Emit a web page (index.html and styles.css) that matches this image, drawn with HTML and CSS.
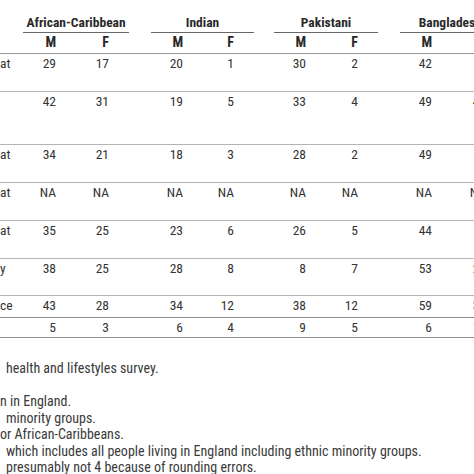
FILE: index.html
```html
<!DOCTYPE html>
<html>
<head>
<meta charset="utf-8">
<link rel="stylesheet" href="styles.css">
</head>
<body>
<div class="page">
  <div class="table">
    <div class="row groups">
      <div class="lab"></div>
      <div class="grp g1">African-Caribbean</div>
      <div class="gap"></div>
      <div class="grp g2">Indian</div>
      <div class="gap"></div>
      <div class="grp g3">Pakistani</div>
      <div class="gap"></div>
      <div class="grp g4">Bangladeshi</div>
    </div>
    <div class="row sexes">
      <div class="lab"></div>
      <div>M</div><div>F</div><div></div>
      <div>M</div><div>F</div><div></div>
      <div>M</div><div>F</div><div></div>
      <div>M</div><div class="last">F</div>
    </div>
    <div class="row data h38">
      <div class="lab">at</div>
      <div>29</div><div>17</div><div></div>
      <div>20</div><div>1</div><div></div>
      <div>30</div><div>2</div><div></div>
      <div>42</div><div class="last">3</div>
    </div>
    <div class="row data h53">
      <div class="lab"></div>
      <div>42</div><div>31</div><div></div>
      <div>19</div><div>5</div><div></div>
      <div>33</div><div>4</div><div></div>
      <div>49</div><div class="last">41</div>
    </div>
    <div class="row data h38">
      <div class="lab">at</div>
      <div>34</div><div>21</div><div></div>
      <div>18</div><div>3</div><div></div>
      <div>28</div><div>2</div><div></div>
      <div>49</div><div class="last">2</div>
    </div>
    <div class="row data h38">
      <div class="lab">at</div>
      <div>NA</div><div>NA</div><div></div>
      <div>NA</div><div>NA</div><div></div>
      <div>NA</div><div>NA</div><div></div>
      <div>NA</div><div class="last">NA</div>
    </div>
    <div class="row data h38">
      <div class="lab">at</div>
      <div>35</div><div>25</div><div></div>
      <div>23</div><div>6</div><div></div>
      <div>26</div><div>5</div><div></div>
      <div>44</div><div class="last">4</div>
    </div>
    <div class="row data h37">
      <div class="lab">y</div>
      <div>38</div><div>25</div><div></div>
      <div>28</div><div>8</div><div></div>
      <div>8</div><div>7</div><div></div>
      <div>53</div><div class="last">21</div>
    </div>
    <div class="row data h22 dark">
      <div class="lab">ce</div>
      <div>43</div><div>28</div><div></div>
      <div>34</div><div>12</div><div></div>
      <div>38</div><div>12</div><div></div>
      <div>59</div><div class="last">32</div>
    </div>
    <div class="row data h20 dark">
      <div class="lab"></div>
      <div>5</div><div>3</div><div></div>
      <div>6</div><div>4</div><div></div>
      <div>9</div><div>5</div><div></div>
      <div>6</div><div class="last">10</div>
    </div>
  </div>
  <div class="notes">
    <p class="ind">health and lifestyles survey.</p>
    <p class="blank">&nbsp;</p>
    <p>n in England.</p>
    <p class="ind">minority groups.</p>
    <p>or African-Caribbeans.</p>
    <p class="ind">which includes all people living in England including ethnic minority groups.</p>
    <p class="ind">presumably not 4 because of rounding errors.</p>
  </div>
</div>
</body>
</html>
```

FILE: styles.css
```css
html, body {
  margin: 0;
  padding: 0;
  background: #ffffff;
}
.page {
  width: 474px;
  height: 474px;
  overflow: hidden;
  font-family: "Roboto", "Liberation Sans", sans-serif;
  font-stretch: 75%;
  color: #333333;
}
.table {
  width: 504px;
}
.row {
  display: grid;
  grid-template-columns: 23px 53px 53px 22px 52px 51px 20px 52px 52px 22px 52px 52px;
  box-sizing: border-box;
}
.row > div {
  text-align: right;
  padding-right: 20px;
  white-space: nowrap;
}
.row > .last {
  padding-right: 18px;
}
.row > .lab {
  text-align: left;
  padding-right: 0;
}
.groups {
  height: 33px;
  padding-top: 14px;
}
.groups > .grp {
  grid-column: span 2;
  text-align: center;
  padding-right: 0;
  font-weight: bold;
  font-size: 13.5px;
  line-height: 16px;
  height: 19px;
  box-sizing: border-box;
  border-bottom: 1px solid #666666;
  color: #2a2a2a;
}
.groups > .gap {
  padding-right: 0;
}
.sexes {
  height: 21px;
  padding-top: 1px;
  font-weight: bold;
  font-size: 14px;
  line-height: 16px;
  border-bottom: 1px solid #999999;
  color: #2a2a2a;
}
.data {
  font-size: 13.5px;
  line-height: 17px;
  padding-top: 1px;
  border-bottom: 1px solid #b4b4b4;
}
.h38 { height: 38px; }
.h37 { height: 37px; }
.h53 { height: 53px; }
.h22 { height: 22px; }
.h20 { height: 20px; }
.dark {
  border-bottom-color: #8f8f8f;
}
.notes {
  margin-top: 22px;
  font-size: 14px;
  line-height: 16.5px;
  color: #3a3a3a;
}
.notes p {
  margin: 0;
  white-space: nowrap;
}
.notes .ind {
  padding-left: 6px;
}
```
